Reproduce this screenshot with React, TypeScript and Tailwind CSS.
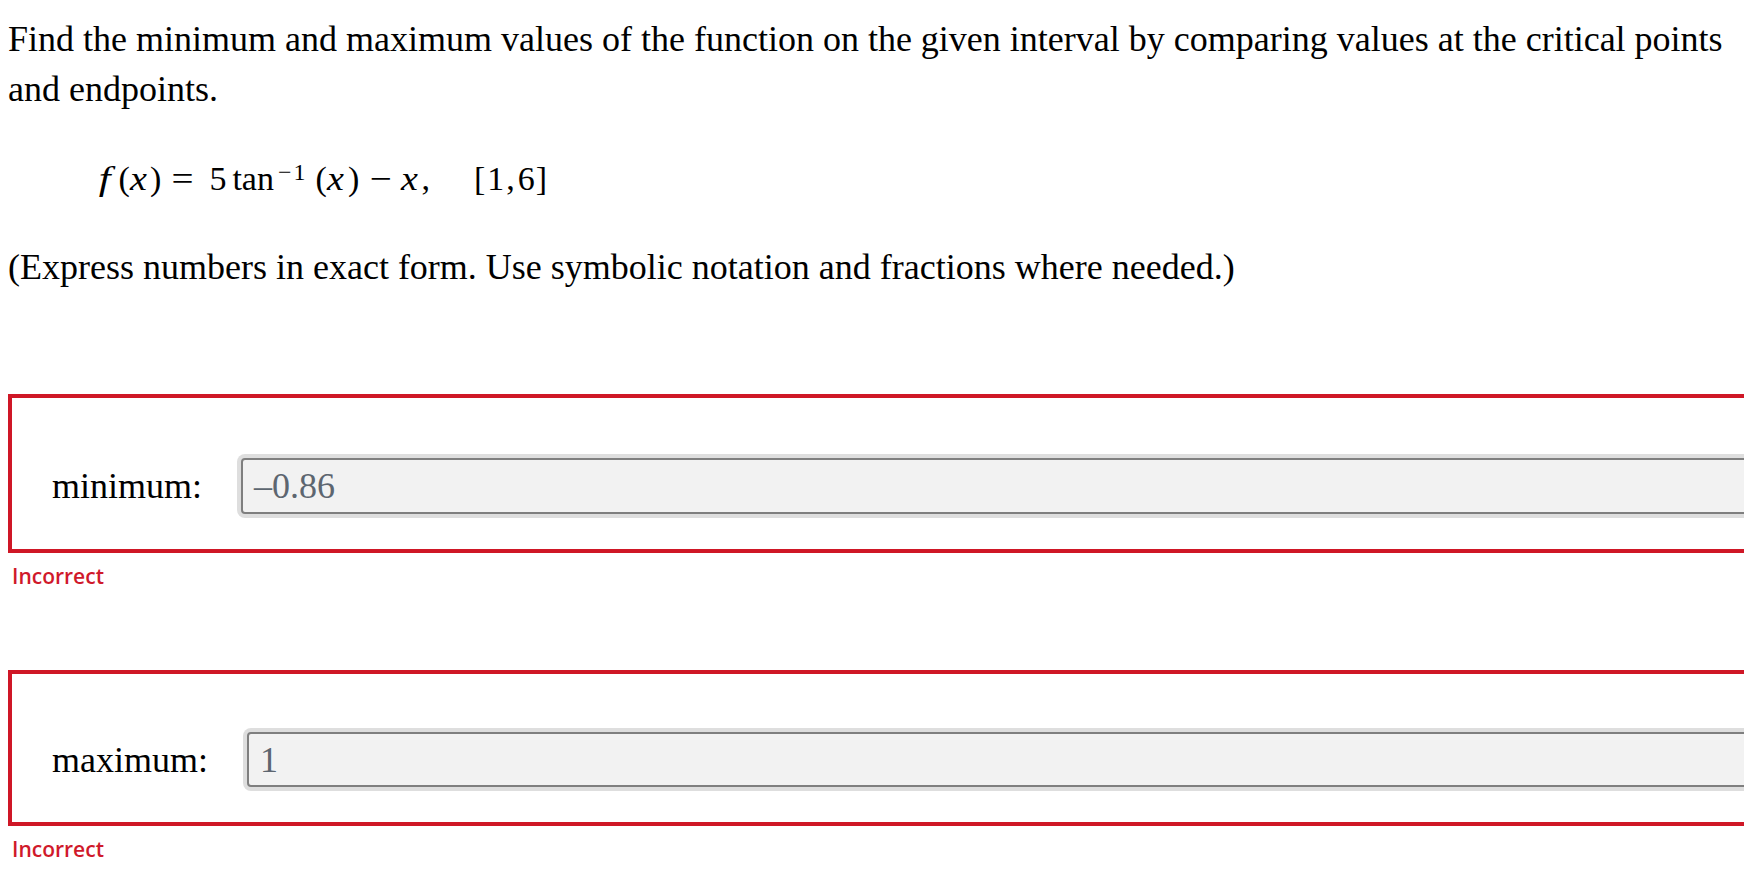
const serif = "font-['Liberation_Serif','Times_New_Roman',serif]";

function AnswerRow({
  label,
  value,
  padTop,
  inputH,
}: {
  label: string;
  value: string;
  padTop: string;
  inputH: string;
}) {
  return (
    <div>
      <div className={`w-[1800px] border-4 border-[#cf1726] pl-10 pb-[35px] ${padTop}`}>
        <div className="flex items-center gap-[39px]">
          <span className={`${serif} text-[36px] leading-[50px] text-black`}>{label}</span>
          <div
            className={`${inputH} flex flex-1 items-center rounded-[4px] border-2 border-[#7f7f7f] bg-[#f2f2f2] pl-[11px] ring-4 ring-[#dedede]`}>
            <span className={`${serif} text-[36px] leading-[50px] text-[#5d6670]`}>{value}</span>
          </div>
        </div>
      </div>
      <div className="mt-[9px] pl-[4px] font-['Open_Sans',sans-serif] text-[21px] font-semibold leading-[28px] text-[#d0192b]">
        Incorrect
      </div>
    </div>
  );
}

// f(x) = 5 tan^-1 (x) - x,  [1,6]  -- glyphs spaced by hand like the typeset original
function Formula() {
  return (
    <div className={`${serif} mt-[40px] pl-[92px] text-[34px] leading-[50px] whitespace-nowrap text-black`}>
      <i className="inline-block scale-x-[1.25]">f</i>
      <span className="ml-[9px]">(</span>
      <i className="ml-[1px] inline-block scale-x-[1.12]">x</i>
      <span className="ml-[4px]">)</span>
      <span className="ml-[12px] inline-block scale-x-[1.15]">=</span>
      <span className="ml-[17px]">5</span>
      <span className="ml-[6px]">tan</span>
      <sup className="relative -top-[10px] ml-[4px] align-baseline text-[24px]">
        −<span className="ml-[2px]">1</span>
      </sup>
      <span className="ml-[10px]">(</span>
      <i className="ml-[1px] inline-block scale-x-[1.12]">x</i>
      <span className="ml-[5px]">)</span>
      <span className="ml-[12px] inline-block scale-x-[1.15]">−</span>
      <i className="ml-[12px] inline-block scale-x-[1.12]">x</i>
      <span className="ml-[4px]">,</span>
      <span className="ml-[44px]">[</span>
      <span className="ml-[2px]">1</span>
      <span className="ml-[2px]">,</span>
      <span className="ml-[3px]">6</span>
      <span className="ml-[1px]">]</span>
    </div>
  );
}

export default function App() {
  return (
    <div className="h-[876px] w-full overflow-hidden bg-white">
      <div className="pl-2 pt-[14px]">
        <p className={`${serif} text-[36px] leading-[50px] text-black`}>
          Find the minimum and maximum values of the function on the given interval by comparing
          values at the critical points and endpoints.
        </p>

        <Formula />

        <p className={`${serif} mt-[38px] text-[36px] leading-[50px] text-black`}>
          (Express numbers in exact form. Use symbolic notation and fractions where needed.)
        </p>

        <div className="mt-[102px]">
          <AnswerRow label="minimum:" value="–0.86" padTop="pt-[60px]" inputH="h-[56px]" />
        </div>
        <div className="mt-[80px]">
          <AnswerRow label="maximum:" value="1" padTop="pt-[58px]" inputH="h-[55px]" />
        </div>
      </div>
    </div>
  );
}
